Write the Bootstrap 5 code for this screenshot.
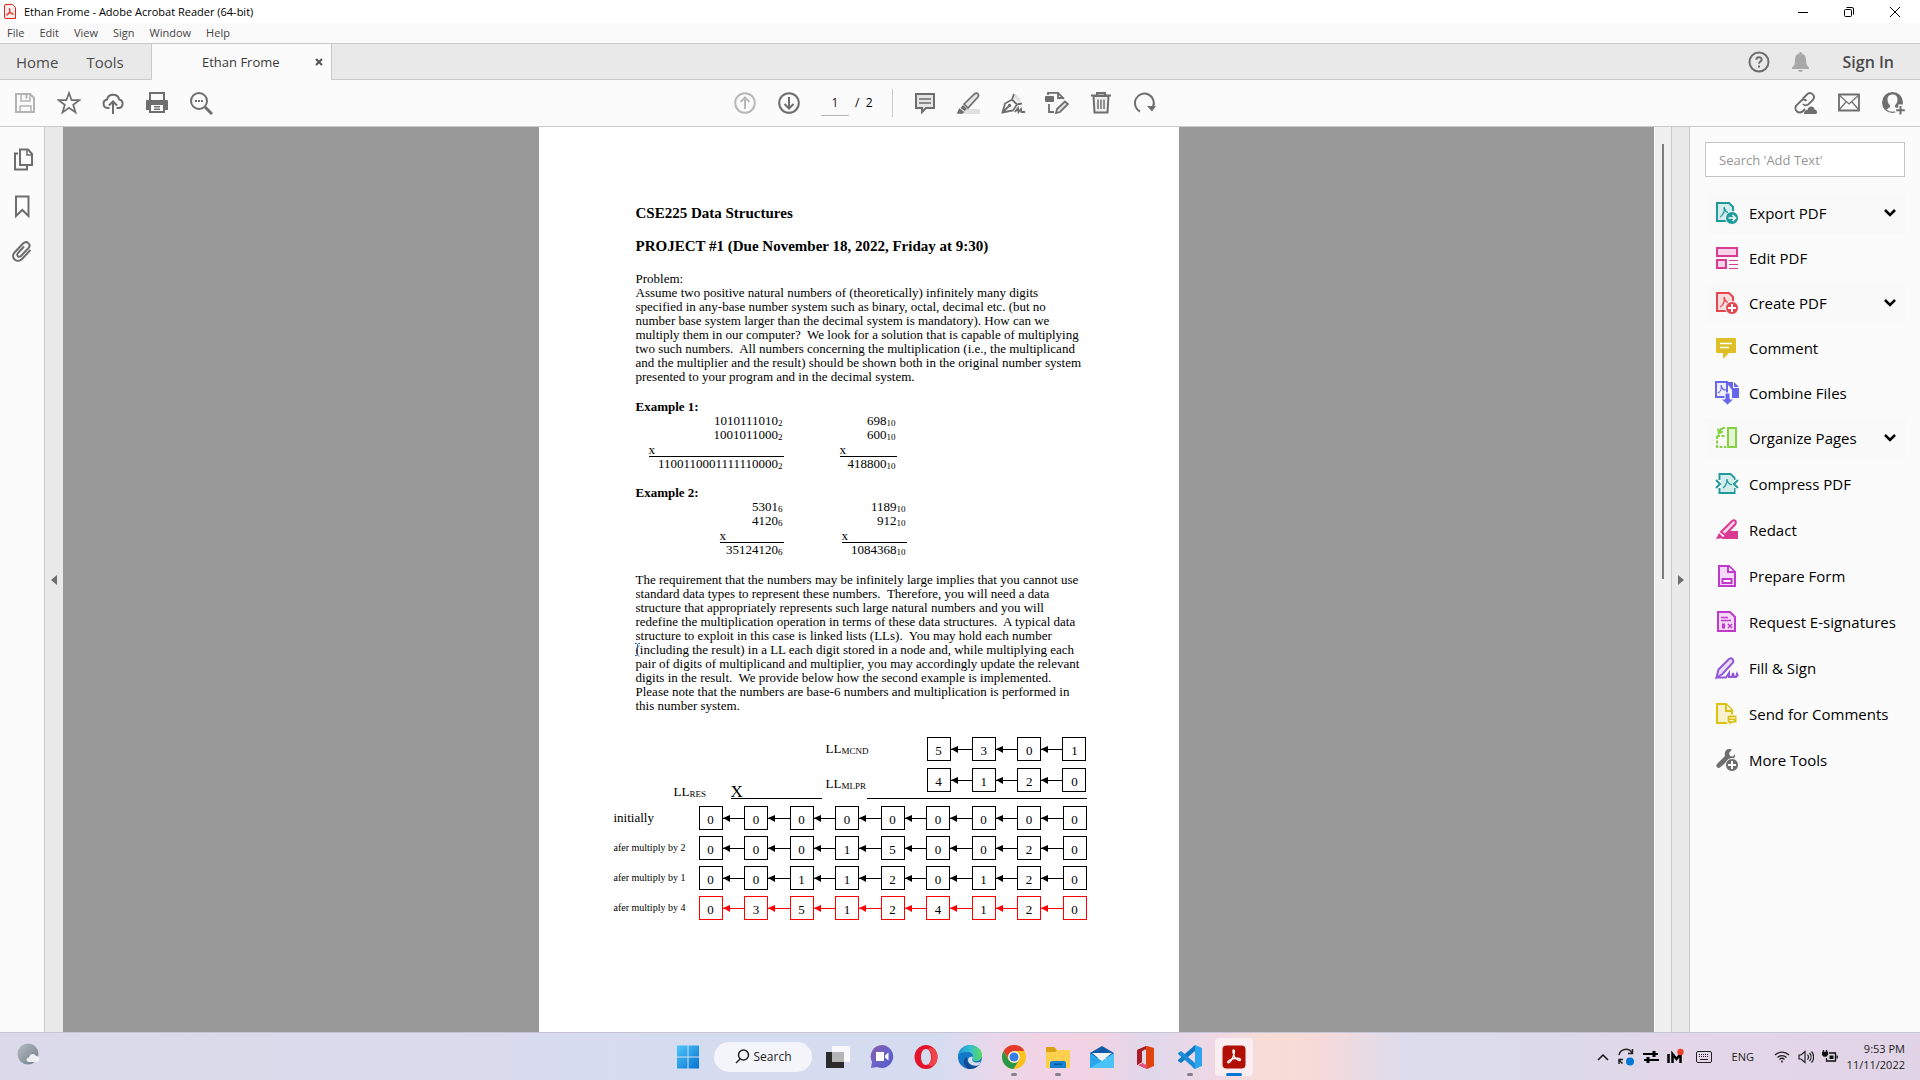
<!DOCTYPE html>
<html lang="en">
<head>
<meta charset="utf-8">
<title>Ethan Frome - Adobe Acrobat Reader (64-bit)</title>
<meta name="viewport" content="width=device-width, initial-scale=1">
<link href="https://cdn.jsdelivr.net/npm/bootstrap@5.3.0/dist/css/bootstrap.min.css" rel="stylesheet">
<style>
  body { font-family: "Open Sans", "Noto Sans", sans-serif; font-size: 14px; line-height: 20px; color: #000; background: #999; }
  svg { display: block; flex: none; }
  button, .plainlink { background: none; border: 0; padding: 0; color: inherit; text-decoration: none; text-align: left; }
  .app { height: 100vh; }

  /* Title bar, menus, tabs, toolbar */
  .titlebar { height: 23px; background: #fff; font-size: 11px; padding: 0 20px 0 4px; }
  .menubar { height: 20px; background: #fafafa; font-size: 11px; color: #444; padding-left: 7px; gap: 15px; }
  .tabstrip { height: 37px; background: #e9e9e9; border-top: 1px solid #cacaca; border-bottom: 1px solid #cacaca; color: #4b4b4b; font-size: 15px; line-height: 18px; padding-right: 26px; }
  .tabstrip-links { gap: 28px; padding-left: 16px; width: 151px; }
  .doctab { width: 181px; height: 36px; background: #fbfbfb; border: solid #cacaca; border-width: 0 1px; font-size: 13px; color: #3a3a3a; align-self: flex-start; padding: 0 8px 0 50px; }
  .account { gap: 22px; }
  .signin { font-weight: 600; font-size: 16px; padding-left: 12px; }
  .toolbar { height: 47px; background: #fbfbfb; border-bottom: 1px solid #cacaca; padding: 0 15px 0 13px; color: #6e6e6e; }
  .toolgroup { gap: 20px; }
  .grow { flex: 1 1 0; }
  .midgroup { padding-right: 28px; }
  .pagebox { width: 28px; height: 26px; border: 0; border-bottom: 1px solid #b5b5b5; border-radius: 0; background: none; text-align: center; font-size: 12px; padding: 0; color: #222; }
  .pagecount { font-size: 12px; color: #000; width: 17px; white-space: nowrap; margin-left: 6px; }
  .vrule { width: 1px; height: 28px; background: #cacaca; }

  /* Work area */
  .siderail { flex: none; width: 45px; background: #fbfbfb; border-right: 1px solid #cacaca; color: #6e6e6e; padding: 20px 0 0 10px; gap: 21px; }
  .gutter { flex: none; width: 18px; background: #e9e9e9; }
  .gutter-right { width: 19px; border: solid #cacaca; border-width: 0 1px; }
  .docview { background: #999; min-width: 0; }
  .scroller { flex: none; width: 17px; background: #f0f0f0; border-left: 1px solid #fff; padding: 17px 0 0 7px; }
  .thumb { width: 2px; height: 49%; background: #7d7d7d; }

  /* Document page */
  .sheet { flex: none; width: 640px; background: #fff; color: #000; font-family: "Liberation Serif", "Times New Roman", serif; font-size: 13px; line-height: 14px; padding-top: 78px; white-space: nowrap; }
  .prose { padding-left: 97px; }
  .sheet h1 { font-size: 15px; line-height: 17px; font-weight: 700; margin: 0 0 16px; }
  .sheet h2 { font-size: 13px; line-height: 14px; font-weight: 700; margin: 0; }
  .sheet p { margin: 17px 0 16px; }
  .sheet .sums + p { margin-top: 16px; }
  .sheet sub { position: static; font-size: 9px; line-height: 0; vertical-align: -1px; }
  .sums { margin-bottom: 15px; }
  .sum { text-align: right; padding-right: 1px; }
  .sum-x { border-bottom: 1px solid #000; text-align: left; height: 15px; line-height: 16px; margin-right: -1px; }
  .caret { position: absolute; left: -1px; top: 1px; }

  /* Linked-list diagram */
  .diagram { padding: 0 92px 0 75px; margin-top: 24px; font-size: 13px; line-height: 14px; }
  .chain { height: 24px; }
  .short { width: 160px; }
  .node { width: 24px; height: 24px; border: 1px solid currentColor; text-align: center; line-height: 26px; flex: none; }
  .node span { color: #000; }
  .edge { flex: 1 1 0; height: 1px; background: currentColor; position: relative; }
  .edge::before { content: ""; position: absolute; left: 0; top: -3px; border: solid transparent; border-width: 3px 7px 4px 0; border-right-color: currentColor; }
  .redrow { color: #f00; }
  .rowlabel { width: 85px; color: #000; font-size: 10px; flex: none; }
  .rowlabel-lg { font-size: 13px; }
  .mlpr-row { height: 31px; margin-top: 7px; }
  .xline { flex: none; width: 91px; border-bottom: 1px solid #000; font-size: 17px; line-height: 12px; }
  .underline-right { flex: none; width: 220px; height: 31px; border-bottom: 1px solid #000; }
  .res-label { flex: none; width: 57px; }
  .chains { gap: 6px; margin-top: 7px; }

  /* Tools pane */
  .rightpane { flex: none; width: 230px; background: #fbfbfb; padding: 15px 15px 0; }
  .searchtools { height: 35px; border: 1px solid #c4c4c4; border-radius: 0; font-size: 13px; padding: 0 13px; background: #fff; width: 100%; margin-bottom: 16px; }
  .searchtools::placeholder { color: #959595; opacity: 1; }
  .toolitem { height: 40px; margin-bottom: 5px; padding: 0 9px 0 10px; gap: 10px; font-size: 15px; width: 100%; white-space: nowrap; }
  .toolitem:nth-child(n+6) { margin-bottom: 6px; }
  .toolitem.expands { background: #f9f9f9; }

  /* Taskbar */
  .taskbar { flex: none; height: 48px; border-top: 1px solid #c8c6d6; font-size: 11px; color: #222;
    background: linear-gradient(90deg, #dbd9ea 0%, #d9dbed 26%, #d5dcf0 36%, #d6dcf0 49%, #ead7ea 52%, #f0d3e5 54%, #f0d3e3 57%, #dfd8ea 60%, #eed8e6 63%, #f8ddd5 66%, #f5dadb 69%, #dddcec 73%, #dcdaea 82%, #e3d6e8 88%, #e1d4e7 100%); }
  .weather { padding-left: 17px; }
  .apps { gap: 6px; }
  .appbtn { width: 38px; height: 38px; position: relative; border-radius: 4px; display: flex; align-items: center; justify-content: center; }
  .appbtn.running::after { content: ""; position: absolute; bottom: 0; left: 16px; width: 6px; height: 3px; border-radius: 2px; background: #85808c; }
  .appbtn.active { background: #faeef3; }
  .appbtn.active::after { left: 11px; width: 16px; background: #0078d4; }
  .searchpill { width: 98px; height: 30px; border-radius: 15px; background: #f3f5fb; font-size: 12px; margin: 0 1px; gap: 4px; }
  .tray { gap: 8px; padding-right: 15px; }
  .clock { text-align: right; line-height: 16px; width: 59px; white-space: nowrap; }
</style>
</head>
<body>
<div class="app d-flex flex-column">
  <header>
    <div class="titlebar d-flex align-items-center">
      <svg width="12" height="15" viewBox="0 0 12 15" fill="none" stroke="#e2231a"><path d="M1.500.500h7l3 3v11H2a1.500 1.500 0 0 1-1.500-1.500V2A1.500 1.500 0 0 1 2 .500z" fill="#fdeeee"/><path d="M5.500 4.500c1 0 .5 2-.5 4.500-.8 2-2.500 3-2.500 1.800 0-.8 2-1.800 4-1.800 2 0 3 .5 2.800 1.200-.5 1-2.800-1-3.500-2.700-.5-1.500-.8-3-.3-3z"/></svg>
      <span class="ms-2 me-auto">Ethan Frome - Adobe Acrobat Reader (64-bit)</span>
      <button aria-label="Minimize"><svg width="10" height="10" stroke="#000"><path d="M0 5.500h10"/></svg></button>
      <button aria-label="Restore" class="mx-4 px-2"><svg class="mx-1" width="10" height="10" fill="none" stroke="#000"><rect x=".5" y="2.500" width="7" height="7" rx="1"/><path d="M2.500.500h5.500a1.500 1.500 0 0 1 1.500 1.500v5.500"/></svg></button>
      <button aria-label="Close"><svg width="10" height="10" stroke="#000"><path d="M0 0l10 10M10 0L0 10"/></svg></button>
    </div>
    <nav class="menubar d-flex align-items-center">
      <a class="plainlink" href="#">File</a><a class="plainlink" href="#">Edit</a><a class="plainlink" href="#">View</a><a class="plainlink" href="#">Sign</a><a class="plainlink" href="#">Window</a><a class="plainlink" href="#">Help</a>
    </nav>
    <div class="tabstrip d-flex align-items-center">
      <div class="tabstrip-links d-flex"><a class="plainlink" href="#">Home</a><a class="plainlink" href="#">Tools</a></div>
      <div class="doctab d-flex align-items-center justify-content-between"><span>Ethan Frome</span><button aria-label="Close tab"><svg width="8" height="8" stroke="#555" stroke-width="2"><path d="M1 1l6 6M7 1L1 7"/></svg></button></div>
      <div class="account d-flex align-items-center ms-auto">
        <button aria-label="Help"><svg width="22" height="22" fill="none" stroke="#6e6e6e" stroke-width="2"><circle cx="11" cy="11" r="9.500"/><path d="M8.300 8.800c0-3.500 5.400-3.300 5.400-.3 0 2-2.700 2-2.700 4.200M11 14.500v2"/></svg></button>
        <button aria-label="Notifications"><svg width="17" height="20" viewBox="0 0 17 20" fill="#a8a8a8"><path d="M7.500 0h2v1.500c3.500.7 4.500 3.500 4.500 6.500 0 4 1 6 3 7.500V17H0v-1.500C2 14 3 12 3 8c0-3 1-5.800 4.500-6.500zM6 18h5c-.5 2.500-4.500 2.500-5 0z"/></svg></button>
        <a class="plainlink signin" href="#">Sign In</a>
      </div>
    </div>
    <div class="toolbar d-flex align-items-center">
      <div class="toolgroup grow d-flex align-items-center">
        <button aria-label="Save"><svg width="24" height="24" fill="none" stroke="#b4b4b4" stroke-width="2"><path d="M3 3h14l4 4v14H3z"/><path d="M8 3v7h9V3M7 21v-6h11v6" stroke-width="1.500"/><path d="M13.500 4v3.500"/></svg></button>
        <button aria-label="Star"><svg width="24" height="24" viewBox="0 0 24 24" fill="none" stroke="currentColor" stroke-width="1.700"><path d="M12 2l2.600 7.200h7.700l-6.100 4.600 2.300 7.700-6.500-4.600-6.500 4.600 2.300-7.700-6.100-4.600h7.700z"/></svg></button>
        <button aria-label="Upload"><svg width="24" height="24" viewBox="0 0 24 24" fill="none" stroke="currentColor" stroke-width="2"><path d="M8.500 17H6.500a4.300 4.300 0 0 1-.5-8.500 6.300 6.300 0 0 1 12.200 0 4.300 4.300 0 0 1-.7 8.500H15.500M12 23V11M8 14.500l4-4 4 4"/></svg></button>
        <button aria-label="Print"><svg width="24" height="24" viewBox="0 0 24 24" fill="currentColor"><path d="M4 1h16v8h-2V3H6v6H4z"/><path d="M2 9h20a1 1 0 0 1 1 1v9h-3v3H4v-3H1v-9a1 1 0 0 1 1-1z"/><path d="M6 14h12v6H6z" fill="#fbfbfb"/><path d="M9 15h6v1.500H9zM9 17.500h6V19H9z"/></svg></button>
        <button aria-label="Find"><svg width="24" height="24" viewBox="0 0 24 24" fill="none" stroke="currentColor" stroke-width="2"><circle cx="10" cy="10" r="8"/><path d="M16 16l7 7" stroke-width="3"/><path d="M6 10h8" stroke-dasharray="2 1"/></svg></button>
      </div>
      <div class="toolgroup midgroup d-flex align-items-center">
        <button aria-label="Previous page"><svg width="24" height="24" fill="none" stroke="#b9b9b9" stroke-width="2"><circle cx="12" cy="12" r="9.800"/><path d="M12 18V7M7.500 11L12 6.500l4.500 4.500"/></svg></button>
        <button aria-label="Next page"><svg width="24" height="24" fill="none" stroke="currentColor" stroke-width="2"><circle cx="12" cy="12" r="9.800"/><path d="M12 6v11M7.500 13l4.500 4.500 4.500-4.500"/></svg></button>
        <div class="d-flex align-items-center"><input class="pagebox" aria-label="Page number" value="1"><span class="pagecount">/&nbsp; 2</span></div>
        <div class="vrule"></div>
        <button aria-label="Comment"><svg width="24" height="24" fill="#e4e4e4" stroke="currentColor" stroke-width="2"><path d="M3 3h18v14H13l-4 4v-4H3z"/><path d="M6 8h12M6 12h12" stroke-width="1.300"/></svg></button>
        <button aria-label="Highlight"><svg width="24" height="24" viewBox="0 0 24 24" fill="none" stroke="currentColor" stroke-width="1.700"><path d="M8 18h15v5H5z" fill="#e0e0e0" stroke="none"/><path d="M7 13L17.500 3c3-2 5 .5 3.500 3L11 17z" fill="#e4e4e4"/><path d="M6 14l4 4-2.500 2-4-3z" fill="currentColor" stroke="none"/><path d="M2.500 18.500L6 21l-1 1H1z" fill="currentColor"/></svg></button>
        <button aria-label="Sign"><svg width="24" height="24" viewBox="0 0 24 24" fill="none" stroke="currentColor" stroke-width="1.800"><path d="M14 3l6 5-2 4-5-5z" fill="#e0e0e0" stroke="none"/><path d="M1.500 21.500l2.500-9 7-4 5 5-4 6zM13 3l-2 5.500 5 5 5-1M2 21l6-6M14 21l3-4 .5 4 2.500-3 .5 3H24"/><circle cx="8.500" cy="14.500" r=".8" fill="currentColor"/></svg></button>
        <button aria-label="Edit"><svg width="24" height="24" viewBox="0 0 24 24" fill="none" stroke="currentColor" stroke-width="1.800"><rect x="0" y="5" width="9" height="6" rx="1" fill="currentColor" stroke="none"/><path d="M3 4V1.800h10l6 6M13 2v5h5M4 13v8h5"/><path d="M11 22l1-4 8-7.500 3 2.500-8 8z" fill="#e4e4e4"/></svg></button>
        <button aria-label="Delete"><svg width="24" height="24" viewBox="0 0 24 24" fill="none" stroke="currentColor" stroke-width="2"><path d="M4.500 5l1 16.500h13l1-16.500z" fill="#f0f0f0"/><path d="M2 4.500h20M8 4V2h8v2"/><path d="M9 8.500v9.500M12 8.500v9.500M15 8.500v9.500" stroke-width="1.500"/></svg></button>
        <button aria-label="Rotate"><svg width="24" height="24" viewBox="0 0 24 24" fill="none" stroke="currentColor" stroke-width="2"><path d="M7 20.500A9.500 9.500 0 1 1 20 16"/><path d="M14 15h9l-4 5.500z" fill="currentColor" stroke="none"/></svg></button>
      </div>
      <div class="toolgroup grow d-flex align-items-center justify-content-end">
        <button aria-label="Share link"><svg width="24" height="24" viewBox="0 0 24 24" fill="none" stroke="currentColor" stroke-width="2"><path d="M9.500 8l5-5a4 4 0 0 1 5.600 5.600l-4.500 4.500a4 4 0 0 1-5.600 0M12 18l-2 2a4 4 0 0 1-6.500-5.600l4.500-4.500a4 4 0 0 1 5.600 0"/><path d="M11 23c0-3 1-4 3.500-4 .5-5 7-4.500 7-.5 3 0 3 4.500 1.500 4.500z" fill="currentColor" stroke="none"/></svg></button>
        <button aria-label="Mail"><svg width="24" height="24" viewBox="0 0 24 24" fill="none" stroke="currentColor" stroke-width="1.800"><path d="M2 3.500h20v16H2z"/><path d="M2 4l10 9L22 4M2 19l7-8M22 19l-7-8" stroke-width="1.200"/></svg></button>
        <button aria-label="Add people"><svg width="24" height="24" viewBox="0 0 24 24"><circle cx="11.500" cy="11.500" r="10.500" fill="currentColor"/><path d="M11.500 3.500c3.500 0 5 2.200 5 5 0 2.500-1 4.500-2.500 5.800v1.700l3.500 2.500c-3.500 3-9 3-12 0L9 16v-1.700C7.500 13 6.500 11 6.500 8.500c0-2.800 1.500-5 5-5z" fill="#fbfbfb"/><path d="M19.500 13.500v11M14 19h11" stroke="#fbfbfb" stroke-width="4.500"/><path d="M19.500 15v8.500M15.200 19.200h8.600" stroke="currentColor" stroke-width="2"/></svg></button>
      </div>
    </div>
  </header>

  <main class="d-flex flex-grow-1 overflow-hidden">
    <nav class="siderail d-flex flex-column" aria-label="Panels">
      <button aria-label="Page thumbnails"><svg width="24" height="25" viewBox="0 0 24 25" fill="none" stroke="currentColor" stroke-width="2"><path d="M8 6.500H5V22.500h12V19"/><path d="M10 2.500h8l4 4.500V18H10z"/><path d="M17 3v5h5" stroke-width="1.500"/></svg></button>
      <button aria-label="Bookmarks"><svg width="24" height="25" viewBox="0 0 24 25" fill="none" stroke="currentColor" stroke-width="2"><path d="M6 3.500h12.500V23l-6.200-6L6 23z"/></svg></button>
      <button aria-label="Attachments"><svg width="24" height="25" viewBox="0 0 24 25" fill="none" stroke="currentColor" stroke-width="2"><path d="M20.500 11l-8.500 9c-5 5-12-1.500-7.500-6.500L13 4.500c4-3.500 8.500 1 5.500 4.500l-7.500 8c-2.500 2-5-.5-3-3l6-6.500"/></svg></button>
    </nav>
    <div class="gutter d-flex align-items-center justify-content-center"><svg width="6" height="10" fill="#6e6e6e"><path d="M6 0v10L0 5z"/></svg></div>
    <section class="docview flex-grow-1 d-flex justify-content-center">
      <article class="sheet">
        <div class="prose">
          <h1>CSE225 Data Structures</h1>
          <h1>PROJECT #1 (Due November 18, 2022, Friday at 9:30)</h1>
          <p>Problem:<br>Assume two positive natural numbers of (theoretically) infinitely many digits<br>specified in any-base number system such as binary, octal, decimal etc. (but no<br>number base system larger than the decimal system is mandatory). How can we<br>multiply them in our computer?&nbsp; We look for a solution that is capable of multiplying<br>two such numbers.&nbsp; All numbers concerning the multiplication (i.e., the multiplicand<br>and the multiplier and the result) should be shown both in the original number system<br>presented to your program and in the decimal system.</p>
          <h2>Example 1:</h2>
          <div class="sums d-flex">
            <div class="sum" style="margin-left:13px;width:135px">1010111010<sub>2</sub><br>1001011000<sub>2</sub><div class="sum-x">x</div>1100110001111110000<sub>2</sub></div>
            <div class="sum" style="margin-left:56px;width:57px">698<sub>10</sub><br>600<sub>10</sub><div class="sum-x">x</div>418800<sub>10</sub></div>
          </div>
          <h2>Example 2:</h2>
          <div class="sums d-flex">
            <div class="sum" style="margin-left:84px;width:64px">5301<sub>6</sub><br>4120<sub>6</sub><div class="sum-x">x</div>35124120<sub>6</sub></div>
            <div class="sum" style="margin-left:58px;width:65px">1189<sub>10</sub><br>912<sub>10</sub><div class="sum-x">x</div>1084368<sub>10</sub></div>
          </div>
          <p>The requirement that the numbers may be infinitely large implies that you cannot use<br>standard data types to represent these numbers.&nbsp; Therefore, you will need a data<br>structure that appropriately represents such large natural numbers and you will<br>redefine the multiplication operation in terms of these data structures.&nbsp; A typical data<br>structure to exploit in this case is linked lists (LLs).&nbsp; You may hold each number<br><span class="position-relative">(<svg class="caret" width="5" height="13" fill="none" stroke="#1c5fc4"><path d="M0 .500h1.500l1 1v10l-1 1H0M5 .500H3.500l-1 1"/></svg></span>including the result) in a LL each digit stored in a node and, while multiplying each<br>pair of digits of multiplicand and multiplier, you may accordingly update the relevant<br>digits in the result.&nbsp; We provide below how the second example is implemented.<br>Please note that the numbers are base-6 numbers and multiplication is performed in<br>this number system.</p>
        </div>
        <div class="diagram">
          <div class="d-flex align-items-center justify-content-end">
            <div class="me-auto" style="margin-left:212px">LL<sub>MCND</sub></div>
            <div class="chain short d-flex align-items-center" data-chain="5301"></div>
          </div>
          <div class="mlpr-row d-flex">
            <div class="res-label align-self-end" style="margin-left:60px">LL<sub>RES</sub></div>
            <div class="xline align-self-end">X</div>
            <div class="align-self-center ms-1 me-auto">LL<sub>MLPR</sub></div>
            <div class="underline-right d-flex justify-content-end"><div class="chain short d-flex align-items-center" data-chain="4120"></div></div>
          </div>
          <div class="chains d-flex flex-column">
            <div class="d-flex align-items-center"><span class="rowlabel rowlabel-lg">initially</span><div class="chain flex-grow-1 d-flex align-items-center" data-chain="000000000"></div></div>
            <div class="d-flex align-items-center"><span class="rowlabel">afer multiply by 2</span><div class="chain flex-grow-1 d-flex align-items-center" data-chain="000150020"></div></div>
            <div class="d-flex align-items-center"><span class="rowlabel">afer multiply by 1</span><div class="chain flex-grow-1 d-flex align-items-center" data-chain="001120120"></div></div>
            <div class="d-flex align-items-center redrow"><span class="rowlabel">afer multiply by 4</span><div class="chain flex-grow-1 d-flex align-items-center" data-chain="035124120"></div></div>
          </div>
        </div>
      </article>
    </section>
    <div class="scroller"><div class="thumb"></div></div>
    <div class="gutter gutter-right d-flex align-items-center justify-content-center"><svg width="6" height="10" fill="#6e6e6e"><path d="M0 0v10l6-5z"/></svg></div>
    <aside class="rightpane">
      <input class="searchtools" type="search" placeholder="Search 'Add Text'" aria-label="Search tools">
      <div class="d-flex flex-column">
        <button class="toolitem expands d-flex align-items-center"><svg width="24" height="24" fill="none" stroke="#1f9a9c" stroke-width="2"><path d="M2 2h12l4 4v14H2z" fill="#d5ecec"/><path d="M5 16c3-2 5-6 4-10 1 4 3 6 6 6" stroke-width="1.300"/><circle cx="17" cy="17" r="6.500" fill="#1f9a9c" stroke="#fbfbfb" stroke-width="1"/><path d="M13.500 17h6M17.500 14l3 3-3 3" stroke="#fff" stroke-width="1.500"/></svg>Export PDF<svg class="ms-auto" width="12" height="8" fill="none" stroke="#000" stroke-width="2.500"><path d="M1 1l5 5 5-5"/></svg></button>
        <button class="toolitem d-flex align-items-center"><svg width="24" height="24" fill="#f6d3e7" stroke="#db3a92" stroke-width="2"><path d="M2 2h20v8H2zM2 14h9v8H2z"/><path d="M14 14.500h9M14 18.500h9M14 22.500h9" stroke-width="1"/></svg>Edit PDF</button>
        <button class="toolitem expands d-flex align-items-center"><svg width="24" height="24" fill="none" stroke="#e34850" stroke-width="2"><path d="M2 2h12l4 4v14H2z" fill="#fadcdd"/><path d="M5 16c3-2 5-6 4-10 1 4 3 6 6 6" stroke-width="1.300"/><circle cx="17" cy="17" r="6.500" fill="#e34850" stroke="#fbfbfb" stroke-width="1"/><path d="M13 17h8M17 13v8" stroke="#fff"/></svg>Create PDF<svg class="ms-auto" width="12" height="8" fill="none" stroke="#000" stroke-width="2.500"><path d="M1 1l5 5 5-5"/></svg></button>
        <button class="toolitem d-flex align-items-center"><svg width="24" height="24" fill="#dfbf26"><path d="M2 2h18a1 1 0 0 1 1 1v13a1 1 0 0 1-1 1h-6l-6 6v-6H2a1 1 0 0 1-1-1V3a1 1 0 0 1 1-1z"/><path d="M5 7.500h12M5 11.500h9" stroke="#fff" stroke-width="1.500"/></svg>Comment</button>
        <button class="toolitem d-flex align-items-center"><svg width="24" height="24" fill="none" stroke="#6767ec" stroke-width="2"><path d="M11 1h7v6h6v10h-7V9z" fill="#6767ec" stroke="none"/><path d="M19 1l5 5h-5z" fill="#6767ec" stroke="none"/><path d="M1 1h11v15H1z" fill="#eeeefc"/><path d="M3 12c2-1 4-4 3-8 1 4 2 5 5 5" stroke-width="1.200"/><path d="M10 12h5v6h4l-6.500 6L6 18h4z" fill="#6767ec" stroke="#fbfbfb" stroke-width="1"/></svg>Combine Files</button>
        <button class="toolitem expands d-flex align-items-center"><svg width="24" height="24" fill="none" stroke="#84d23f" stroke-width="2"><path d="M13 2h8v19h-8z" fill="#e4f5d5"/><path d="M2 10v11h9M2 10h9" stroke-dasharray="3 1.500"/><path d="M10 2C7 2 5 3 4 6" /><path d="M2 2l1 7 6-3z" fill="#84d23f" stroke="none"/></svg>Organize Pages<svg class="ms-auto" width="12" height="8" fill="none" stroke="#000" stroke-width="2.500"><path d="M1 1l5 5 5-5"/></svg></button>
        <button class="toolitem d-flex align-items-center"><svg width="24" height="24" fill="none" stroke="#1f9a9c" stroke-width="2"><path d="M4.500 8V2h11l4 4v2M4.500 16v5h15v-5" /><path d="M6 3h9l4 4v13H6z" fill="#d5ecec" stroke="none"/><path d="M8 16c3-2 4-5 4-9 0 3 2 5 5 6" stroke-width="1.300"/><path d="M1 8l4 4-4 4M23 8l-4 4 4 4"/></svg>Compress PDF</button>
        <button class="toolitem d-flex align-items-center"><svg width="24" height="24" fill="none" stroke="#db3a92" stroke-width="2"><path d="M14 14h8v6H9z" fill="#db3a92"/><path d="M6 14L17 3c3-2 5 1 3.500 3L10 17z" fill="#f6d3e7"/><path d="M4 15l5 5-8 1z" fill="#db3a92" stroke="none"/></svg>Redact</button>
        <button class="toolitem d-flex align-items-center"><svg width="24" height="24" fill="none" stroke="#c038cc" stroke-width="2"><path d="M4 2h10l6 6v14H4z" fill="#f3d9f5"/><path d="M13 2v6h6M7.500 15h9v4h-9z" fill="#fff"/></svg>Prepare Form</button>
        <button class="toolitem d-flex align-items-center"><svg width="24" height="24" fill="none" stroke="#c038cc" stroke-width="2"><path d="M3 2h12l5 5v14H3z" fill="#f3d9f5"/><path d="M6 7.500h7M6 10.500h10" stroke-width="1.300"/><path d="M8.500 13.500v5" stroke-width="3"/><path d="M13 14l4 4M17 14l-4 4" stroke-width="1.500"/></svg>Request E-signatures</button>
        <button class="toolitem d-flex align-items-center"><svg width="24" height="24" fill="none" stroke="#9256d9" stroke-width="2"><path d="M1.500 21.500l2-8L14 3c3-2 5 1 4 3.500L7.500 18z" fill="#e8dcf7"/><path d="M1.500 21.500H11l3-4.500v4h3l1-4 1 4h2l1-3 1 2.500"/></svg>Fill &amp; Sign</button>
        <button class="toolitem d-flex align-items-center"><svg width="24" height="24" fill="none" stroke="#ddc110" stroke-width="2"><path d="M2 2h9l6 6v13H2z" fill="#f7f0cd"/><path d="M11 2v7h6" fill="#fff"/><path d="M12 13h10v8h-5l-3 3v-3h-2z" fill="#ddc110" stroke="#fbfbfb" stroke-width="1"/><path d="M14.500 16h6M14.500 18.500h4" stroke="#fff" stroke-width="1"/></svg>Send for Comments</button>
        <button class="toolitem d-flex align-items-center"><svg width="24" height="24" fill="#6e6e6e"><path d="M14 1a6 6 0 0 1 3 .500L14 5l1 3 3 .500L20 6c.8 3-2 7-6 5.500L5 19.500c-2 1.500-5-1-3-3.500l8-8C9 4 11 1 14 1z"/><circle cx="17" cy="17" r="6.500" stroke="#fbfbfb"/><path d="M13 17h8M17 13v8" stroke="#fff" stroke-width="2"/></svg>More Tools</button>
      </div>
    </aside>
  </main>

  <footer class="taskbar d-flex align-items-center">
    <div class="weather grow"><button aria-label="Weather"><svg width="24" height="22" viewBox="0 0 24 22"><defs><linearGradient id="moon" x2="1" y2="1"><stop stop-color="#b4bdc4"/><stop offset="1" stop-color="#727d88"/></linearGradient></defs><circle cx="11" cy="11" r="10.500" fill="url(#moon)"/><path d="M12 19c-3 0-3.500-4.500 0-4.500C12.500 10 18 10 19 13c4-.5 4.500 6 1 6z" fill="#eef0f4"/></svg></button></div>
    <nav class="apps d-flex align-items-center" aria-label="Apps">
      <button class="appbtn" aria-label="Start"><svg width="24" height="24" viewBox="0 0 24 24"><defs><linearGradient id="win" x2="1" y2="1"><stop stop-color="#4cc8fb"/><stop offset="1" stop-color="#0672d0"/></linearGradient></defs><path d="M1 .500h10.500v11H1zM12.500.500H23v11H12.500zM1 12.500h10.500v11H1zM12.500 12.500H23v11H12.500z" fill="url(#win)"/></svg></button>
      <button class="searchpill d-flex align-items-center justify-content-center"><svg width="15" height="15" fill="none" stroke="#222" stroke-width="1.500"><circle cx="8.500" cy="6" r="5"/><path d="M5 10L1 14"/></svg>Search</button>
      <button class="appbtn" aria-label="Task view"><svg width="24" height="24" viewBox="0 0 24 24"><path d="M6 1h18v16H6z" fill="#f8f8fa"/><path d="M0 7h18v16H0z" fill="#2b2b2b"/><path d="M6 7h12v10H6z" fill="#b5b5b5"/></svg></button>
      <button class="appbtn" aria-label="Chat"><svg width="24" height="24" viewBox="0 0 24 24"><defs><linearGradient id="chat" x2="1" y2="1"><stop stop-color="#8b5aa8"/><stop offset=".5" stop-color="#6b64c8"/><stop offset="1" stop-color="#5058c8"/></linearGradient></defs><path d="M12 0a11.500 11.500 0 1 1-5 22L1 23l1-6A11.500 11.500 0 0 1 12 0z" fill="url(#chat)"/><path d="M6 7h8v9H6zM15 10.500l3.500-3v8l-3.500-3z" fill="#fff"/></svg></button>
      <button class="appbtn" aria-label="Opera"><svg width="24" height="24" viewBox="0 0 24 24"><path fill-rule="evenodd" d="M12 0a11.500 12 0 1 1 0 24 11.500 12 0 1 1 0-24zM12 4c-3 0-5 3.500-5 8s2 8 5 8 5-3.500 5-8-2-8-5-8z" fill="#e3142b"/><path d="M14 4.300C17 1.500 20 3 21 4.500a12 12 0 0 1 0 15c-2 2-4.500 2.500-7 .3 5-3 5-12.500 0-15.500z" fill="#f0434a"/></svg></button>
      <button class="appbtn" aria-label="Edge"><svg width="24" height="24" viewBox="0 0 24 24"><defs><linearGradient id="edgeg"><stop stop-color="#1c8fd8"/><stop offset=".5" stop-color="#35bfd0"/><stop offset="1" stop-color="#5bdc5a"/></linearGradient></defs><circle cx="12" cy="12" r="12" fill="#1478c8"/><path d="M0 11C1 4 6 0 12 0c7 0 12 5 12 10 0 4-3 6-6 6-4 0-4-2-3-4 0-3-2-5-6-5-4 0-8 2-9 4z" fill="url(#edgeg)"/><path d="M9 12c-1 7 5 11 12 8-3 3-7 4-10 4C5 22 4 14 9 12z" fill="#134a92"/><path d="M15 12c-2 3 0 5.500 3.500 5.500 2 0 3.500-.5 4.500-1.500l-2 4c-5 2-11-1-11-5 0-2 2-4 5-3z" fill="#d8dcee"/></svg></button>
      <button class="appbtn running" aria-label="Chrome"><svg width="24" height="24" viewBox="0 0 24 24"><circle cx="12" cy="12" r="12" fill="#fbc31c"/><path d="M1.600 6A12 12 0 0 1 22.400 6H12a6 6 0 0 0-5.500 8z" fill="#e33b2e"/><path d="M1.600 6A12 12 0 0 0 11.500 24l5.500-9a6 6 0 0 1-10.300 0z" fill="#27984a"/><circle cx="12" cy="12" r="5.800" fill="#fff"/><circle cx="12" cy="12" r="4.600" fill="#3a7ce8"/></svg></button>
      <button class="appbtn running" aria-label="File Explorer"><svg width="24" height="24" viewBox="0 0 24 24"><path d="M0 2h8l3 3h12v8H0z" fill="#dba011"/><path d="M0 7h9l2-2h13v18H0z" fill="#fccf4e"/><path d="M4 23v-5a2 2 0 0 1 2-2h12a2 2 0 0 1 2 2v5z" fill="#1482d4"/><path d="M8 18.500h8v1.500H8z" fill="#0a5698"/></svg></button>
      <button class="appbtn" aria-label="Mail"><svg width="24" height="24" viewBox="0 0 24 24"><path d="M0 8l12-7 12 7v5H0z" fill="#0e5ba8"/><path d="M0 8l12 8 12-8v15H0z" fill="#2aa6ea"/><path d="M24 8v15H0l12-7z" fill="#4cc3f7"/><path d="M2 8h20l-10 8z" fill="#f2f5fa"/></svg></button>
      <button class="appbtn" aria-label="Office"><svg width="24" height="24" viewBox="0 0 24 24"><path d="M3 5l10-4 7 2v18l-7 3-9-4 8 1V4L8 6v11l-5 3z" fill="#e0430f"/><path d="M3 5l9-4v3L8 6v11l-5 3z" fill="#a81c28"/><path d="M4 20l5-2 4 3v3z" fill="#ee4a7c"/></svg></button>
      <button class="appbtn running" aria-label="Visual Studio Code"><svg width="24" height="24" viewBox="0 0 24 24"><path d="M17 0l7 3v18l-7 3-3-2 3-3V6z" fill="#2aa4ee"/><path d="M17 0v6L3 18l-3-2v-1z" fill="#0f7ac4"/><path d="M17 24v-6L3 6 0 8v1z" fill="#1a8cd8"/></svg></button>
      <button class="appbtn running active" aria-label="Adobe Acrobat"><svg width="24" height="24" viewBox="0 0 24 24"><rect x=".5" y=".5" width="23" height="23" rx="4" fill="#b10f04"/><path d="M11.500 5c1.500 0 1 3-.5 7s-4 6.500-5 5.500c-1-1.200 2.500-3.500 6.500-4s6 0 6 1.300c-.5 1.500-4 .2-5.800-2.800C11.300 9.500 10.300 5 11.500 5z" fill="none" stroke="#fff" stroke-width="1.400"/></svg></button>
    </nav>
    <div class="tray grow d-flex align-items-center justify-content-end">
      <button aria-label="Show hidden icons"><svg width="12" height="8" fill="none" stroke="#111" stroke-width="1.500"><path d="M1 7l5-5 5 5"/></svg></button>
      <svg width="18" height="18" fill="none" stroke="#222" stroke-width="1.500"><path d="M2 7a7 7 0 0 1 13-2M15.500 1v4.500H11M2 16v-4.500h4M2.500 12a7 7 0 0 0 3 3.500"/><circle cx="13" cy="13.500" r="4" fill="#0078d4" stroke="none"/></svg>
      <svg width="16" height="14" stroke="#000" stroke-width="2"><path d="M0 4h15M1 10h15"/><path d="M11 1v6M5 7v6" stroke-width="3"/></svg>
      <svg width="17" height="18"><path d="M1.500 6v9M5.500 15V6l4 5 4-5v9" fill="none" stroke="#000" stroke-width="2.500"/><circle cx="13.500" cy="4" r="3.200" fill="#e8402a"/></svg>
      <svg class="ms-1" width="16" height="12" fill="none" stroke="#222"><rect x=".5" y=".5" width="15" height="11" rx="1.500"/><path d="M3 3.500h10M3 5.500h10" stroke-dasharray="1 1"/><path d="M4 8.500h8"/></svg>
      <span class="mx-2 px-1">ENG</span>
      <svg width="16" height="13" viewBox="0 0 16 13" fill="none" stroke="#222" stroke-width="1.300"><path d="M1 5a10 10 0 0 1 14 0M3.500 7.500a6.500 6.500 0 0 1 9 0M5.500 9.500a3.600 3.600 0 0 1 5 0"/><circle cx="8" cy="11.500" r="1" fill="#222" stroke="none"/></svg>
      <svg width="16" height="14" fill="none" stroke="#222" stroke-width="1.200"><path d="M1 5h2l4-3.500v11L3 9H1zM9.500 4.500a4 4 0 0 1 0 5M11.500 3a6 6 0 0 1 0 8M13.500 1.500a8 8 0 0 1 0 11"/></svg>
      <svg width="16" height="13" fill="none" stroke="#111" stroke-width="1.300"><path d="M7 3h6.500v8H4.500V8M15.200 5.500v3"/><path d="M7.500 5.500h4v3.500h-4z" fill="#111" stroke="none"/><path d="M.5 2.500h5v2L4 6H2L.5 4.500zM1.500 0v2M4.500 0v2" fill="#111"/></svg>
      <div class="clock">9:53 PM<br>11/11/2022</div>
    </div>
  </footer>
</div>
<script>
  // Each chain is a row of one-digit nodes, joined by arrows that point left.
  document.querySelectorAll('[data-chain]').forEach(function (row) {
    row.innerHTML = row.dataset.chain.split('').map(function (digit) {
      return '<div class="node"><span>' + digit + '</span></div>';
    }).join('<div class="edge"></div>');
  });
</script>
<script src="https://cdn.jsdelivr.net/npm/bootstrap@5.3.0/dist/js/bootstrap.bundle.min.js"></script>
</body>
</html>
